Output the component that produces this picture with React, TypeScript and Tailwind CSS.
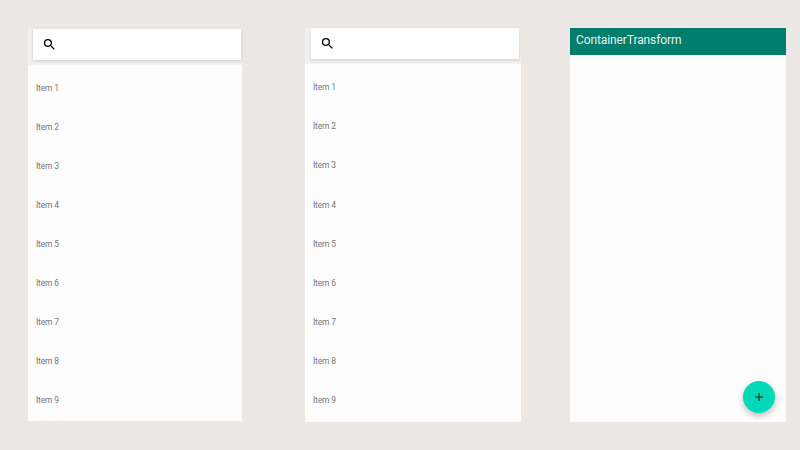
import { Plus } from "lucide-react";

const items = ["Item 1", "Item 2", "Item 3", "Item 4", "Item 5", "Item 6", "Item 7", "Item 8", "Item 9"];

function SearchBar({ className }: { className: string }) {
  return (
    <div className={`flex h-[31px] w-[208px] items-center bg-white pl-[9px] shadow-[0_1px_3px_rgba(0,0,0,0.16)] ${className}`}>
      <svg viewBox="0 0 24 24" className="h-[15px] w-[15px] fill-black">
        <path d="M15.5 14h-.79l-.28-.27A6.471 6.471 0 0 0 16 9.5 6.5 6.5 0 1 0 9.5 16c1.61 0 3.09-.59 4.23-1.57l.27.28v.79l5 4.99L20.49 19l-4.99-5zm-6 0C7.01 14 5 11.99 5 9.5S7.01 5 9.5 5 14 7.01 14 9.5 11.99 14 9.5 14z" />
      </svg>
    </div>
  );
}

function ItemList({ className, rowClass }: { className: string; rowClass: string }) {
  return (
    <div className={`flex flex-col ${className}`}>
      {items.map((item) => (
        <div key={item} className={`flex items-center pl-[8px] text-[8.5px] tracking-[-0.2px] text-[#777777] ${rowClass}`}>
          {item}
        </div>
      ))}
    </div>
  );
}

export default function App() {
  return (
    <div className="flex h-[450px] w-[800px] overflow-hidden bg-[#ece8e6] font-['Roboto',sans-serif]">
      {/* search to list, start */}
      <div className="ml-[28px] mt-[29px] h-[392px] w-[214px] bg-[#fefdfe]">
        <div className="bg-[#f3f1f0]">
          <SearchBar className="ml-[5px]" />
          <div className="h-[5px]" />
        </div>
        <ItemList className="mt-[4px]" rowClass="h-[39px]" />
      </div>

      {/* search to list, later frame */}
      <div className="ml-[63px] mt-[28px] h-[394px] w-[216px] bg-[#fefdfe]">
        <div className="bg-[#f3f1f0]">
          <SearchBar className="ml-[6px]" />
          <div className="h-[5px]" />
        </div>
        <ItemList className="mt-[4px]" rowClass="h-[39.15px]" />
      </div>

      {/* detail screen */}
      <div className="relative ml-[49px] mt-[28px] h-[394px] w-[216px] bg-[#fefdfe]">
        <div className="flex h-[27px] items-center bg-[#007d6c] pb-[3px] pl-[6px] text-[12px] tracking-[-0.1px] text-[#e4f4f0]">
          ContainerTransform
        </div>
        <button className="absolute bottom-[9px] right-[11px] flex h-[32px] w-[32px] items-center justify-center rounded-full bg-[#03d8b8] shadow-[0_3px_6px_rgba(0,0,0,0.25)]">
          <Plus className="h-[12px] w-[12px] text-[#111111]" strokeWidth={2.2} />
        </button>
      </div>
    </div>
  );
}
